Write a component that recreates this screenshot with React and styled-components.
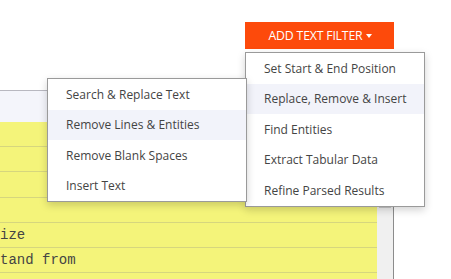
import React from 'react'
import styled, { createGlobalStyle } from 'styled-components'

const GlobalStyle = createGlobalStyle`
	html, body {
		margin: 0;
		padding: 0;
		background: #fff;
		overflow: hidden;
	}
	* {
		box-sizing: border-box;
	}
`

const Stage = styled.div`
	position: relative;
	width: 451px;
	height: 279px;
	overflow: hidden;
	font-family: 'Open Sans', 'Noto Sans', sans-serif;
`

const Toolbar = styled.div`
	display: flex;
	justify-content: flex-end;
	width: 394px;
	padding-top: 22px;
	height: 49px;
`

const FilterButton = styled.button`
	display: flex;
	align-items: center;
	justify-content: center;
	gap: 4px;
	width: 149px;
	height: 27px;
	padding: 0 0 0 2px;
	border: none;
	background: #fd4a0b;
	color: #fff;
	font-family: inherit;
	font-size: 12.3px;
	letter-spacing: -0.2px;
	text-transform: uppercase;
	cursor: pointer;
`

const Caret = styled.span`
	width: 0;
	height: 0;
	border-left: 3.5px solid transparent;
	border-right: 3.5px solid transparent;
	border-top: 4px solid #fff;
	margin-top: 1px;
`

const Panel = styled.div`
	margin-top: 41px;
	width: 394px;
	border-top: 1px solid #b8b8c0;
	border-right: 1px solid #8c8c8c;
`

const PanelHeader = styled.div`
	height: 31px;
	background: #f4f5fb;
`

const Body = styled.div`
	display: flex;
	height: 160px;
`

const Lines = styled.div`
	flex: 1;
	background: #f4f47a;
`

const Line = styled.div`
	height: 25.2px;
	border-bottom: 1px solid #d6d67e;
	font-family: 'Liberation Mono', monospace;
	font-size: 14px;
	line-height: 24px;
	color: #444;
	white-space: pre;
	overflow: hidden;
`

const Scrollbar = styled.div`
	width: 16px;
	background: #f0f0f0;
	padding: 2px 2px 0;
`

const Thumb = styled.div`
	height: 84px;
	background: #c8c8c8;
`

const Menu = styled.ul`
	position: absolute;
	left: ${p => p.left}px;
	top: ${p => p.top}px;
	width: ${p => p.width}px;
	z-index: ${p => p.layer};
	margin: 0;
	padding: 0;
	list-style: none;
	background: #fff;
	border: 1px solid #9a9a9a;
	box-shadow: 0 3px 8px rgba(0, 0, 0, 0.18);
`

const Item = styled.li`
	height: 30.5px;
	display: flex;
	align-items: center;
	padding-left: 18px;
	font-size: 12px;
	color: #444;
	background: ${p => (p.active ? '#f2f3fa' : 'transparent')};
`

const rows = ['', '', '', '', 'ize', 'tand from', '']

const mainItems = [
	'Set Start & End Position',
	'Replace, Remove & Insert',
	'Find Entities',
	'Extract Tabular Data',
	'Refine Parsed Results',
]

const subItems = [
	'Search & Replace Text',
	'Remove Lines & Entities',
	'Remove Blank Spaces',
	'Insert Text',
]

const App = () => {
	return (
		<Stage>
			<GlobalStyle />
			<Toolbar>
				<FilterButton>
					Add Text Filter <Caret />
				</FilterButton>
			</Toolbar>
			<Panel>
				<PanelHeader />
				<Body>
					<Lines>
						{rows.map((text, i) => (
							<Line key={i}>{text}</Line>
						))}
					</Lines>
					<Scrollbar>
						<Thumb />
					</Scrollbar>
				</Body>
			</Panel>

			<Menu left={245} top={52} width={180} layer={1}>
				{mainItems.map((label, i) => (
					<Item key={label} active={i === 1}>
						{label}
					</Item>
				))}
			</Menu>
			<Menu left={47} top={78} width={200} layer={2}>
				{subItems.map((label, i) => (
					<Item key={label} active={i === 1}>
						{label}
					</Item>
				))}
			</Menu>
		</Stage>
	)
}

export default App
